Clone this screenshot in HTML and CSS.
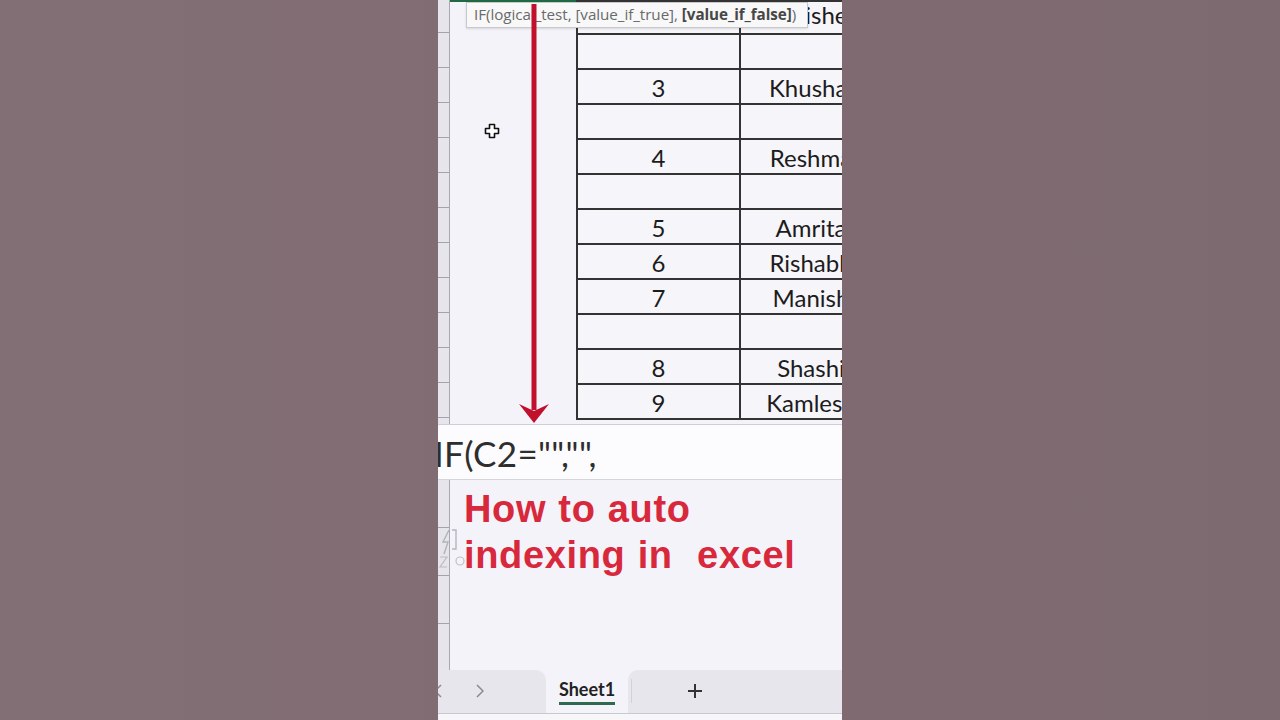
FILE: index.html
```html
<!DOCTYPE html>
<html lang="en">
<head>
<meta charset="utf-8">
<title>How to auto indexing in excel</title>
<link rel="stylesheet" href="styles.css">
</head>
<body>
<div class="stage">
  <div class="panel">
    <div class="sheet">
      <div class="strip strip-top">
        <div class="srow first"></div>
        <div class="srow"></div><div class="srow"></div><div class="srow"></div>
        <div class="srow"></div><div class="srow"></div><div class="srow"></div>
        <div class="srow"></div><div class="srow"></div><div class="srow"></div>
        <div class="srow"></div><div class="srow"></div>
      </div>
      <div class="blank">
        <svg class="cursor" viewBox="0 0 16 16" width="16" height="16">
          <path d="M5.5 1.5 H10.5 V5.5 H14.5 V10.5 H10.5 V14.5 H5.5 V10.5 H1.5 V5.5 H5.5 Z" fill="#fff" stroke="#111" stroke-width="1.6" stroke-linejoin="round"/>
        </svg>
      </div>
      <div class="tablewrap">
        <div class="grid">
          <div class="cell head"></div><div class="cell name head">Abhishek</div>
          <div class="cell"></div><div class="cell name"></div>
          <div class="cell">3</div><div class="cell name">Khushal</div>
          <div class="cell"></div><div class="cell name"></div>
          <div class="cell">4</div><div class="cell name">Reshma</div>
          <div class="cell"></div><div class="cell name"></div>
          <div class="cell">5</div><div class="cell name">Amrita</div>
          <div class="cell">6</div><div class="cell name">Rishabh</div>
          <div class="cell">7</div><div class="cell name">Manish</div>
          <div class="cell"></div><div class="cell name"></div>
          <div class="cell">8</div><div class="cell name">Shashi</div>
          <div class="cell">9</div><div class="cell name">Kamlesh</div>
        </div>
      </div>
    </div>

    <div class="formula"><span class="ftext">IF(C2="","",</span></div>

    <div class="lower">
      <div class="strip strip-low">
        <div class="lrow"></div><div class="lrow"></div><div class="lrow"></div><div class="lrow"></div>
      </div>
      <div class="title">How to auto<br>indexing in&nbsp; excel</div>
    </div>

    <div class="tabs">
      <div class="tab-left">
        <svg class="chev chev-l" viewBox="0 0 8 14" width="8" height="14"><path d="M7 1 L1 7 L7 13" fill="none" stroke="#8a8a90" stroke-width="1.5"/></svg>
        <svg class="chev chev-r" viewBox="0 0 8 14" width="8" height="14"><path d="M1 1 L7 7 L1 13" fill="none" stroke="#8a8a90" stroke-width="1.5"/></svg>
      </div>
      <div class="tab-active"><span class="tab-label">Sheet1</span></div>
      <div class="tab-right">
        <span class="sep"></span>
        <svg class="plus" viewBox="0 0 16 16" width="16" height="16"><path d="M8 1 V15 M1 8 H15" stroke="#333" stroke-width="2"/></svg>
      </div>
    </div>
    <div class="footer"></div>

    <div class="tooltip">IF(logical_test, [value_if_true], <b>[value_if_false]</b>)</div>
    <svg class="arrow" viewBox="0 0 30 420" width="30" height="420">
      <line x1="15" y1="0" x2="15" y2="406" stroke="#c0102c" stroke-width="5"/>
      <polygon points="0,400 15,407 30,400 15,419" fill="#c0102c"/>
    </svg>
    <svg class="mark" viewBox="0 0 30 44" width="30" height="44">
      <path d="M11 3 L5 15 H10 L6 27" fill="none" stroke="#a7a6b0" stroke-width="1.4"/>
      <path d="M14 3 H18 V22 H14" fill="none" stroke="#a7a6b0" stroke-width="1.4"/>
      <circle cx="22" cy="34" r="4" fill="none" stroke="#b4b3bc" stroke-width="1.2"/>
      <path d="M2 30 H9 L2 40 H9" fill="none" stroke="#b4b3bc" stroke-width="1.2"/>
    </svg>
  </div>
</div>
</body>
</html>
```

FILE: styles.css
```css
* { box-sizing: border-box; }

html, body {
  margin: 0;
  padding: 0;
  background: #806c73;
}

.stage {
  display: flex;
  justify-content: center;
  height: 720px;
  background: linear-gradient(90deg, #826f75 0%, #7f6a71 60%, #7d6a70 100%);
}

.panel {
  position: relative;
  width: 404px;
  height: 720px;
  overflow: hidden;
  background: #f4f3f9;
  display: flex;
  flex-direction: column;
  font-family: Lato, "Open Sans", sans-serif;
}

/* ---------- sheet ---------- */
.sheet {
  display: flex;
  height: 424px;
  flex: none;
}

.strip {
  width: 12px;
  flex: none;
  background: #e6e5ec;
  border-right: 1px solid #a9a8b2;
}

.srow {
  height: 35px;
  border-bottom: 1px solid #a4a3ad;
}
.srow.first { height: 33px; }

.blank {
  position: relative;
  width: 126px;
  flex: none;
  border-top: 2px solid #1f6a42;
}

.cursor {
  position: absolute;
  left: 34px;
  top: 121px;
}

.tablewrap {
  flex: 1;
  overflow: hidden;
}

.grid {
  display: grid;
  grid-template-columns: 163px 142px;
  grid-template-rows: 33px;
  grid-auto-rows: 35px;
  width: 307px;
  border-left: 2px solid #333;
  border-top: 2px solid #333;
  background: #f6f5fa;
}

.cell {
  border-right: 2px solid #333;
  border-bottom: 2px solid #333;
  display: flex;
  align-items: center;
  justify-content: center;
  font-size: 24px;
  color: #1c1c1c;
  white-space: nowrap;
  padding-top: 1px;
}
.cell.head {
  padding-top: 0;
  padding-bottom: 6px;
}

/* ---------- formula bar ---------- */
.formula {
  height: 56px;
  flex: none;
  background: #fcfcfe;
  border-top: 1px solid #cfced6;
  border-bottom: 1px solid #d6d5dc;
  overflow: hidden;
  padding-top: 1px;
}

.ftext {
  display: block;
  margin-left: -4px;
  font-size: 35px;
  line-height: 54px;
  letter-spacing: 0.3px;
  color: #2e2e2e;
  white-space: nowrap;
}

/* ---------- lower ---------- */
.lower {
  display: flex;
  height: 190px;
  flex: none;
}

.lrow {
  height: 48px;
  border-bottom: 1px solid #a4a3ad;
}
.strip-low .lrow:last-child { border-bottom: none; }

.title {
  padding: 6px 0 0 14px;
  font-family: "Liberation Sans", Arial, sans-serif;
  font-weight: 700;
  font-size: 38px;
  line-height: 46px;
  letter-spacing: 0.65px;
  word-spacing: 1px;
  color: #d8283c;
  white-space: nowrap;
}

/* ---------- tabs ---------- */
.tabs {
  display: flex;
  height: 44px;
  flex: none;
  border-bottom: 1px solid #c9c8cf;
}

.tab-left {
  width: 108px;
  background: #e7e6ec;
  border-top-right-radius: 10px;
  display: flex;
  align-items: center;
  padding-bottom: 2px;
}

.chev-l { margin-left: -4px; }
.chev-r { margin-left: 34px; }

.tab-active {
  width: 82px;
  display: flex;
  justify-content: center;
  padding-top: 9px;
}

.tab-label {
  font-family: Lato, "Open Sans", sans-serif;
  font-weight: 700;
  font-size: 18px;
  line-height: 21px;
  height: 26px;
  color: #222;
  border-bottom: 3px solid #2e6a4f;
}

.tab-right {
  flex: 1;
  background: #e7e6ec;
  border-top-left-radius: 10px;
  display: flex;
  align-items: center;
  padding-bottom: 2px;
}

.sep {
  width: 1px;
  height: 24px;
  background: #d2d1d8;
  margin-left: 3px;
}

.plus { margin-left: 55px; }

.footer {
  flex: 1;
  background: #f7f7fa;
}

/* ---------- overlays ---------- */
.tooltip {
  position: absolute;
  left: 28px;
  top: 2px;
  width: 342px;
  height: 26px;
  padding: 0 0 0 7px;
  background: #f8f8f9;
  border: 1px solid #c9c9cc;
  box-shadow: 0 1px 2px rgba(0, 0, 0, 0.12);
  font-family: "Open Sans", "Noto Sans", sans-serif;
  font-size: 15.2px;
  line-height: 23px;
  letter-spacing: -0.05px;
  color: #6a6a6a;
  white-space: nowrap;
  overflow: hidden;
}
.tooltip b { color: #474747; font-weight: 700; }

.arrow {
  position: absolute;
  left: 81px;
  top: 4px;
}

.mark {
  position: absolute;
  left: 0;
  top: 527px;
  opacity: 0.8;
}
```
